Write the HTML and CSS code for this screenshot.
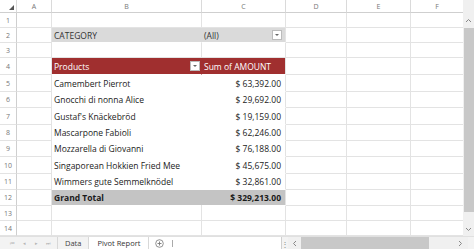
FILE: index.html
```html
<!DOCTYPE html>
<html>
<head>
<meta charset="utf-8">
<link rel="stylesheet" href="styles.css">
</head>
<body>
<div class="app">
  <div class="main">
    <div class="sheet">
      <div class="hd corner"><span class="tri"></span></div>
      <div class="hd">A</div>
      <div class="hd">B</div>
      <div class="hd">C</div>
      <div class="hd">D</div>
      <div class="hd">E</div>
      <div class="hd last">F</div>

      <div class="rn">1</div><div class="c"></div><div class="c"></div><div class="c"></div><div class="c"></div><div class="c"></div><div class="c last"></div>

      <div class="rn">2</div><div class="c"></div>
      <div class="c filt nob">CATEGORY</div>
      <div class="c filt"><span>(All)</span><span class="dd"></span></div>
      <div class="c"></div><div class="c"></div><div class="c last"></div>

      <div class="rn">3</div><div class="c"></div><div class="c"></div><div class="c"></div><div class="c"></div><div class="c"></div><div class="c last"></div>

      <div class="rn">4</div><div class="c"></div>
      <div class="c head nob"><span>Products</span><span class="dd"></span></div>
      <div class="c head">Sum of AMOUNT</div>
      <div class="c"></div><div class="c"></div><div class="c last"></div>

      <div class="rn">5</div><div class="c"></div><div class="c pv">Camembert Pierrot</div><div class="c pv num">$ 63,392.00</div><div class="c"></div><div class="c"></div><div class="c last"></div>
      <div class="rn">6</div><div class="c"></div><div class="c pv">Gnocchi di nonna Alice</div><div class="c pv num">$ 29,692.00</div><div class="c"></div><div class="c"></div><div class="c last"></div>
      <div class="rn">7</div><div class="c"></div><div class="c pv">Gustaf's Knäckebröd</div><div class="c pv num">$ 19,159.00</div><div class="c"></div><div class="c"></div><div class="c last"></div>
      <div class="rn">8</div><div class="c"></div><div class="c pv">Mascarpone Fabioli</div><div class="c pv num">$ 62,246.00</div><div class="c"></div><div class="c"></div><div class="c last"></div>
      <div class="rn">9</div><div class="c"></div><div class="c pv">Mozzarella di Giovanni</div><div class="c pv num">$ 76,188.00</div><div class="c"></div><div class="c"></div><div class="c last"></div>
      <div class="rn">10</div><div class="c"></div><div class="c pv">Singaporean Hokkien Fried Mee</div><div class="c pv num">$ 45,675.00</div><div class="c"></div><div class="c"></div><div class="c last"></div>
      <div class="rn">11</div><div class="c"></div><div class="c pv">Wimmers gute Semmelknödel</div><div class="c pv num">$ 32,861.00</div><div class="c"></div><div class="c"></div><div class="c last"></div>

      <div class="rn">12</div><div class="c"></div>
      <div class="c total nob">Grand Total</div>
      <div class="c total num">$ 329,213.00</div>
      <div class="c"></div><div class="c"></div><div class="c last"></div>

      <div class="rn">13</div><div class="c"></div><div class="c"></div><div class="c"></div><div class="c"></div><div class="c"></div><div class="c last"></div>
      <div class="rn">14</div><div class="c"></div><div class="c"></div><div class="c"></div><div class="c"></div><div class="c"></div><div class="c last"></div>
    </div>
    <div class="vscroll">
      <div class="arr">
        <svg width="7" height="5" viewBox="0 0 7 5"><path d="M1 4 L3.5 1.5 L6 4" fill="none" stroke="#888" stroke-width="1"/></svg>
      </div>
      <div class="vtrack"><div class="vthumb"></div></div>
      <div class="arr">
        <svg width="7" height="5" viewBox="0 0 7 5"><path d="M1 1 L3.5 3.5 L6 1" fill="none" stroke="#888" stroke-width="1"/></svg>
      </div>
    </div>
  </div>
  <div class="tabbar">
    <div class="nav">
      <span class="navb">⏮</span><span class="navb">◂</span><span class="navb">▸</span><span class="navb">⏭</span>
    </div>
    <div class="tab">Data</div>
    <div class="tab active">Pivot Report</div>
    <div class="addarea">
      <svg class="plus" width="9" height="9" viewBox="0 0 9 9"><circle cx="4.5" cy="4.5" r="3.8" fill="none" stroke="#777" stroke-width="0.8"/><path d="M4.5 2.5 V6.5 M2.5 4.5 H6.5" stroke="#777" stroke-width="0.9"/></svg>
      <span class="bar"></span>
    </div>
    <div class="split">⋮</div>
    <div class="hscroll">
      <svg width="5" height="7" viewBox="0 0 5 7"><path d="M4 1 L1.5 3.5 L4 6" fill="none" stroke="#888" stroke-width="1"/></svg>
      <div class="htrack"><div class="hthumb"></div></div>
      <svg width="5" height="7" viewBox="0 0 5 7"><path d="M1 1 L3.5 3.5 L1 6" fill="none" stroke="#888" stroke-width="1"/></svg>
    </div>
  </div>
</div>
</body>
</html>
```

FILE: styles.css
```css
* { box-sizing: border-box; }
html, body { margin: 0; padding: 0; background: #fff; }
body { font-family: "Open Sans", "Noto Sans", sans-serif; font-size: 8.5px; color: #222; width: 474px; height: 249px; overflow: hidden; }
.app { display: flex; flex-direction: column; width: 474px; height: 249px; }
.main { display: flex; height: 236px; }
.sheet {
  display: grid;
  grid-template-columns: 17px 35px 150px 84px 61px 64px 52px;
  grid-template-rows: 13px 15px 15px 15px 17px 17px 16px 17px 16px 16px 17px 16px 16px 15px 15px;
  width: 463px;
  overflow: hidden;
}
.hd {
  border-right: 1px solid #dadada;
  border-bottom: 1px solid #cfcfcf;
  color: #777;
  font-size: 7px;
  display: flex; align-items: center; justify-content: center;
  padding-top: 1px;
}
.hd.last, .c.last { border-right: none; }
.corner { position: relative; }
.tri {
  position: absolute; right: 2px; bottom: 2px;
  width: 0; height: 0;
  border-left: 5px solid transparent;
  border-bottom: 5px solid #555;
}
.rn {
  border-right: 1px solid #cfcfcf;
  border-bottom: 1px solid #e3e3e3;
  color: #777;
  font-size: 7px;
  display: flex; align-items: center; justify-content: center;
}
.c {
  border-right: 1px solid #e3e3e3;
  border-bottom: 1px solid #e3e3e3;
  display: flex; align-items: center;
  padding: 0 3px 0 2px;
  white-space: nowrap;
  overflow: hidden;
}
.filt { background: #dadada; border-bottom-color: #fff; border-right-color: #e3e3e3; justify-content: space-between; color: #333; }
.filt.nob { border-right-color: #dadada; }
.head { background: #a02f2f; color: #fff; border-bottom-color: #fff; border-right-color: #e3e3e3; justify-content: space-between; padding-right: 1px; }
.head.nob { border-right-color: #a02f2f; }
.pv { border-bottom-color: #fff; border-right-color: #fff; }
.pv.num { border-right-color: #e3e3e3; }
.num { justify-content: flex-end; padding-right: 4px; }
.total { background: #c4c4c4; font-weight: bold; border-bottom-color: #fff; border-right-color: #e3e3e3; color: #1a1a1a; }
.total.nob { border-right-color: #c4c4c4; }
.dd {
  width: 10px; height: 10px;
  background: #fff;
  border: 1px solid #bbb;
  position: relative;
  flex: none;
}
.dd::after {
  content: ""; position: absolute; left: 2px; top: 3px;
  border-left: 2px solid transparent; border-right: 2px solid transparent;
  border-top: 2px solid #666;
}
.vscroll { width: 11px; background: #f0f0f0; display: flex; flex-direction: column; padding-top: 13px; }
.arr { height: 14px; display: flex; align-items: center; justify-content: center; }
.vtrack { flex: 1; display: flex; flex-direction: column; padding: 1px 0 0 1px; }
.vthumb { height: 184px; background: #c8c8c8; }
.tabbar { height: 13px; display: flex; align-items: stretch; background: #f3f3f3; border-top: 1px solid #e0e0e0; font-size: 7.5px; color: #444; }
.nav { width: 58px; display: flex; align-items: center; justify-content: space-around; padding: 0 2px 0 6px; border-right: 1px solid #d8d8d8; }
.navb { color: #b5b5b5; font-size: 5px; }
.tab { display: flex; align-items: center; padding: 0 7px; border-right: 1px solid #d8d8d8; }
.active { background: #fff; padding: 0 8px; color: #333; }
.addarea { width: 133px; background: #fff; border-right: 1px solid #cfcfcf; display: flex; align-items: center; padding-left: 6px; gap: 8px; }
.bar { width: 1px; height: 7px; background: #aaa; }
.split { width: 6px; display: flex; align-items: center; justify-content: center; color: #888; font-size: 8px; }
.hscroll { width: 180px; display: flex; align-items: center; gap: 4px; padding: 0 5px 0 4px; background: #f0f0f0; }
.htrack { flex: 1; height: 100%; display: flex; align-items: stretch; }
.hthumb { width: 128px; background: #c8c8c8; }
```
